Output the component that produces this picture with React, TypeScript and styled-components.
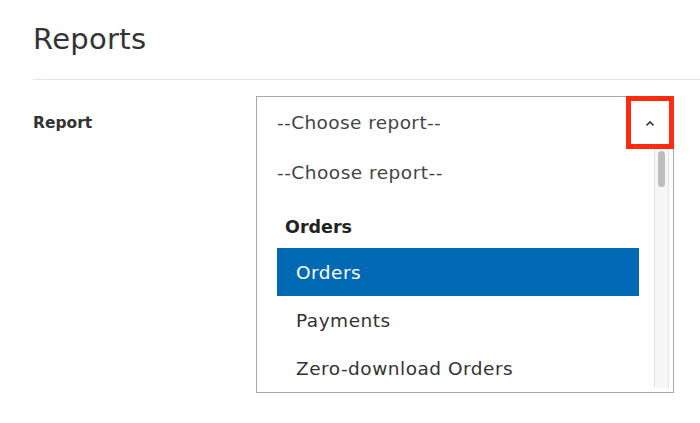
import styled, { createGlobalStyle } from "styled-components";

const GlobalStyle = createGlobalStyle`
  body {
    margin: 0;
    background: #ffffff;
    font-family: "DejaVu Sans", "Open Sans", sans-serif;
    color: #333333;
  }
`;

const Page = styled.div`
  padding: 20px 0 0 33px;
`;

const Title = styled.h1`
  margin: 0;
  font-size: 29px;
  font-weight: 400;
  letter-spacing: 0.3px;
  line-height: 38px;
  color: #333;
`;

const Divider = styled.hr`
  margin: 21px 0 0;
  border: none;
  border-top: 1px solid #e3e8ed;
`;

const FormRow = styled.div`
  display: flex;
  padding-top: 16px;
`;

const Label = styled.div`
  width: 223px;
  font-size: 15.5px;
  font-weight: 700;
  line-height: 24px;
  padding-top: 15px;
  color: #333;
`;

const SelectBox = styled.div`
  width: 416px;
  height: 295px;
  border: 1px solid #a9a9a9;
  display: flex;
  flex-direction: column;
`;

const SelectHead = styled.div`
  position: relative;
  height: 51px;
  display: flex;
  align-items: center;
  padding-left: 20px;
  font-size: 18.5px;
  letter-spacing: 0.4px;
  color: #444;
`;

const Focus = styled.div`
  position: absolute;
  top: -1px;
  right: -1px;
  width: 38px;
  height: 43px;
  border: 5px solid #ff2a10;
  display: flex;
  align-items: center;
  justify-content: center;
`;

const ListArea = styled.div`
  flex: 1;
  display: flex;
  padding: 0 4px 4px 20px;
  min-height: 0;
`;

const Options = styled.div`
  flex: 1;
  padding-right: 15px;
  overflow: hidden;
`;

const Option = styled.div<{ $indent?: boolean; $selected?: boolean }>`
  height: 48px;
  display: flex;
  align-items: center;
  padding-left: ${(p) => (p.$indent ? "19px" : "0")};
  font-size: 18.5px;
  letter-spacing: 0.5px;
  white-space: nowrap;
  background: ${(p) => (p.$selected ? "#0069b4" : "transparent")};
  color: ${(p) => (p.$selected ? "#ffffff" : p.$indent ? "#333" : "#444")};
`;

const Group = styled.div`
  margin-top: 10px;
  height: 42px;
  display: flex;
  align-items: center;
  padding-left: 8px;
  font-size: 17.5px;
  font-weight: 700;
  color: #222;
`;

const Track = styled.div`
  width: 13px;
  background: #f7f7f7;
  border-left: 1px solid #e4e4e4;
  border-right: 1px solid #e4e4e4;
  display: flex;
  justify-content: center;
  padding-top: 3px;
`;

const Thumb = styled.div`
  width: 7px;
  height: 36px;
  border-radius: 4px;
  background: #bdbdbd;
`;

const Chevron = () => (
  <svg width="12" height="8" viewBox="0 0 12 8">
    <path d="M2.5 6.5 L6 3 L9.5 6.5" fill="none" stroke="#333" strokeWidth="1.6" />
  </svg>
);

export default function App() {
  return (
    <>
      <GlobalStyle />
      <Page>
        <Title>Reports</Title>
        <Divider />
        <FormRow>
          <Label>Report</Label>
          <SelectBox>
            <SelectHead>
              --Choose report--
              <Focus>
                <Chevron />
              </Focus>
            </SelectHead>
            <ListArea>
              <Options>
                <Option>--Choose report--</Option>
                <Group>Orders</Group>
                <Option $indent $selected>
                  Orders
                </Option>
                <Option $indent>Payments</Option>
                <Option $indent>Zero-download Orders</Option>
              </Options>
              <Track>
                <Thumb />
              </Track>
            </ListArea>
          </SelectBox>
        </FormRow>
      </Page>
    </>
  );
}
